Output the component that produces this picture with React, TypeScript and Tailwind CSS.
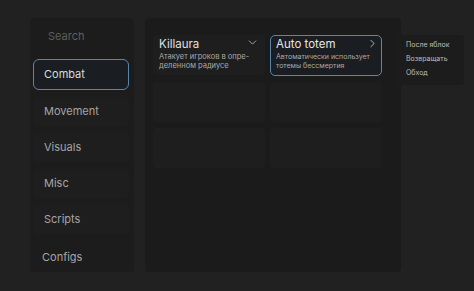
import { ChevronDown, ChevronRight } from "lucide-react";

const items = ["Movement", "Visuals", "Misc", "Scripts"];

function EmptyCard() {
  return <div className="h-[40px] rounded-[4px] bg-[#1e1e1e]" />;
}

export default function App() {
  return (
    <div
      className="relative w-[474px] h-[291px] overflow-hidden bg-[#212121] flex items-start pt-[18px] pl-[30px]"
      style={{ fontFamily: "Inter, 'Noto Sans', sans-serif" }}
    >
      {/* Sidebar */}
      <div className="w-[104px] h-[254px] bg-[#1c1c1c] rounded-[4px] flex flex-col pt-[8px] pl-[3px] pr-[5px]">
        <div className="h-[20px] pl-[15px] text-[11px] text-[#5e5e5e] leading-[20px]">Search</div>
        <div className="mt-[13px] h-[31px] rounded-[6px] border-[1.5px] border-[#5a86aa] bg-[#1a1d21] flex items-center pl-[10px] text-[11px] text-[#dcdcdc]">
          Combat
        </div>
        {items.map((t) => (
          <div key={t} className="mt-[7px] h-[29px] rounded-[4px] bg-[#1e1e1e] flex items-center pl-[11px] text-[11px] text-[#a5a5a5]">
            {t}
          </div>
        ))}
        <div className="mt-[8px] h-[30px] flex items-center pl-[9px] text-[11px] text-[#a5a5a5]">Configs</div>
      </div>

      {/* Main panel */}
      <div className="ml-[11px] w-[256px] h-[254px] bg-[#1b1b1b] rounded-[4px] pt-[17px] pl-[8px]">
        <div className="grid grid-cols-[112px_112px] gap-x-[5px] gap-y-[6px]">
          <div className="h-[40px] rounded-[4px] bg-[#1e1e1e] px-[6px] pt-[2px] relative">
            <div className="text-[11.5px] text-[#e0e0e0] leading-[14px]">Killaura</div>
            <div className="text-[7.5px] text-[#a9a9a9] leading-[9px] mt-[1px] whitespace-nowrap">
              Атакует игроков в опре-<br />деленном радиусе
            </div>
            <ChevronDown className="absolute right-[6px] top-[1px] w-[13px] h-[13px] text-[#bdbdbd]" strokeWidth={1.5} />
          </div>
          <div className="h-[41px] rounded-[5px] border-[1.5px] border-[#5a86aa] bg-[#1a1d21] px-[5px] pt-[1px] relative">
            <div className="text-[11.5px] text-[#e6e6e6] leading-[14px]">Auto totem</div>
            <div className="text-[7px] text-[#a9a9a9] leading-[9px] mt-[1px] whitespace-nowrap">
              Автоматически использует<br />тотемы бессмертия
            </div>
            <ChevronRight className="absolute right-[2px] top-[1px] w-[13px] h-[13px] text-[#cfcfcf]" strokeWidth={1.5} />
          </div>
          <EmptyCard />
          <EmptyCard />
          <EmptyCard />
          <EmptyCard />
        </div>
      </div>

      {/* Submenu */}
      <div className="absolute left-[396px] top-[35px] w-[68px] h-[50px] bg-[#1c1c1c] rounded-[4px] pl-[10px] pt-[5px] flex flex-col gap-[4px]">
        <div className="text-[7px] text-[#bdbdbd] leading-[10px]">После яблок</div>
        <div className="text-[7px] text-[#bdbdbd] leading-[10px]">Возвращать</div>
        <div className="text-[7px] text-[#bdbdbd] leading-[10px]">Обход</div>
      </div>
    </div>
  );
}
